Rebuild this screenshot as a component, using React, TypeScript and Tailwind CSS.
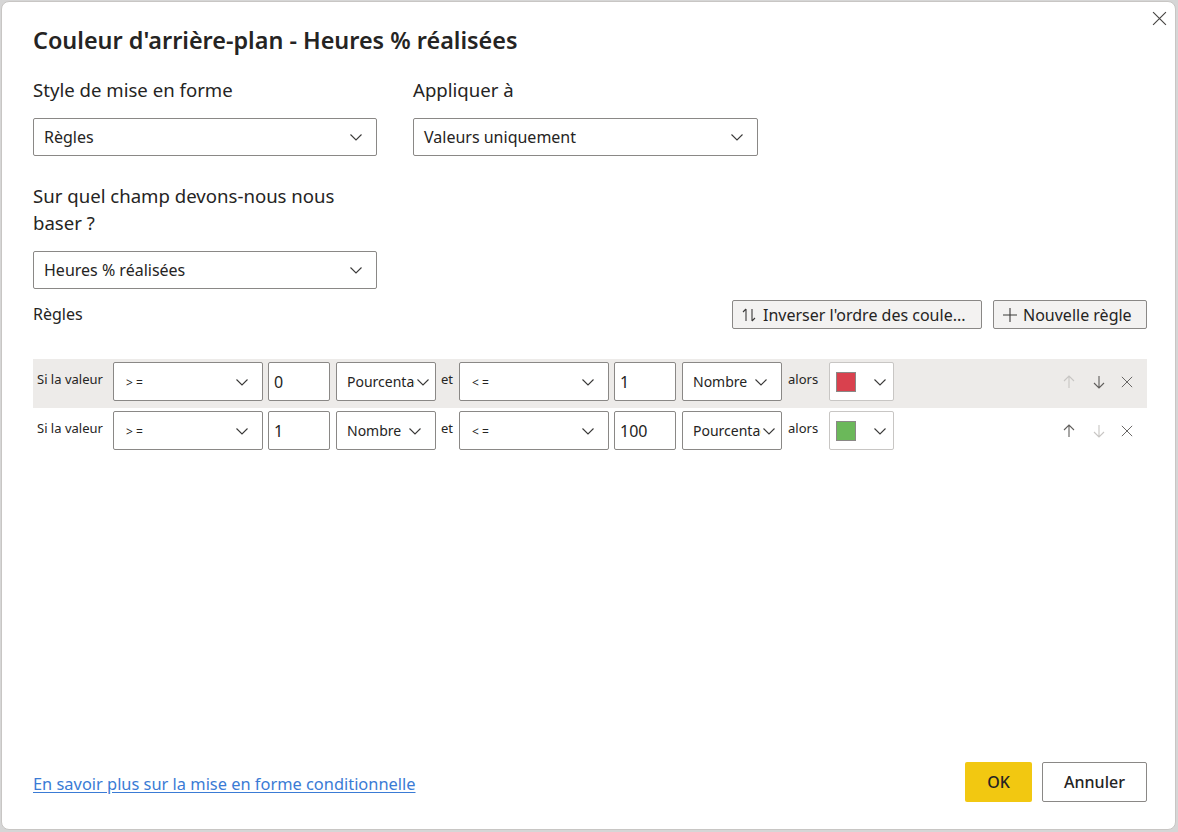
import React from "react";

const font = { fontFamily: '"Segoe UI", "Noto Sans", sans-serif' };

function Chevron({ className = "" }: { className?: string }) {
  return (
    <svg width="16" height="16" viewBox="0 0 16 16" className={className} fill="none">
      <path d="M2.5 5.5 8 11l5.5-5.5" stroke="#3b3a39" strokeWidth="1.1" />
    </svg>
  );
}

function Select({ value, w }: { value: string; w: string }) {
  return (
    <div
      className={`${w} h-[38px] border border-[#8a8886] rounded-[2px] bg-white flex items-center justify-between pl-[10px] pr-[12px] text-[16px] text-[#252423]`}
    >
      <span>{value}</span>
      <Chevron />
    </div>
  );
}

function RuleSelect({ value, w, small, tight }: { value: string; w: string; small?: boolean; tight?: boolean }) {
  return (
    <div
      className={`${w} h-[39px] border border-[#8a8886] rounded-[2px] bg-white flex items-center justify-between pl-[10px] ${tight ? "pr-[4px]" : "pr-[12px]"} text-[#252423] overflow-hidden`}
    >
      <span className={`${small ? "text-[12px] pl-[2px] pt-[3px]" : "text-[14px]"} whitespace-nowrap overflow-hidden`}>{value}</span>
      <Chevron className="shrink-0" />
    </div>
  );
}

function NumInput({ value }: { value: string }) {
  return (
    <div className="w-[62px] h-[39px] border border-[#8a8886] rounded-[2px] bg-white flex items-center pl-[5px] text-[16px] text-[#252423]">
      {value}
    </div>
  );
}

function Arrow({ up, faded }: { up?: boolean; faded?: boolean }) {
  return (
    <svg width="16" height="16" viewBox="0 0 16 16" fill="none" className={up ? "" : "rotate-180"}>
      <path d="M8 14V2M3 7l5-5 5 5" stroke={faded ? "#c8c6c4" : "#605e5c"} strokeWidth="1.1" />
    </svg>
  );
}

function Cross({ size = 14, color = "#605e5c" }: { size?: number; color?: string }) {
  return (
    <svg width={size} height={size} viewBox="0 0 14 14" fill="none">
      <path d="M1 1l12 12M13 1 1 13" stroke={color} strokeWidth="1.1" />
    </svg>
  );
}

function Rule({
  shaded,
  a,
  unitA,
  b,
  unitB,
  color,
  upFaded,
  downFaded,
}: {
  shaded?: boolean;
  a: string;
  unitA: string;
  b: string;
  unitB: string;
  color: string;
  upFaded?: boolean;
  downFaded?: boolean;
}) {
  return (
    <div className={`flex items-start h-[49px] pt-[3px] pl-[4px] pr-[14px] ${shaded ? "bg-[#edebe9]" : "bg-white"}`}>
      <span className="text-[13px] text-[#252423] w-[76px] pt-[8px] whitespace-nowrap">Si la valeur</span>
      <RuleSelect value="> =" w="w-[150px]" small />
      <div className="w-[5px]" />
      <NumInput value={a} />
      <div className="w-[6px]" />
      <RuleSelect value={unitA} w="w-[100px]" tight={unitA === "Pourcentage"} />
      <span className="text-[13px] text-[#252423] w-[23px] pl-[5px] pt-[8px]">et</span>
      <RuleSelect value="< =" w="w-[150px]" small />
      <div className="w-[5px]" />
      <NumInput value={b} />
      <div className="w-[6px]" />
      <RuleSelect value={unitB} w="w-[100px]" tight={unitB === "Pourcentage"} />
      <span className="text-[13px] text-[#252423] w-[47px] pl-[6px] pt-[8px]">alors</span>
      <div className="w-[65px] h-[39px] border border-[#c8c6c4] rounded-[2px] bg-white flex items-center pl-[6px] pr-[4px] gap-[16px]">
        <div className="w-[20px] h-[20px] border border-[#8a8886]" style={{ background: color }} />
        <Chevron />
      </div>
      <div className="flex-1" />
      <div className="flex items-center gap-[14px] h-[39px]">
        <Arrow up faded={upFaded} />
        <Arrow faded={downFaded} />
        <Cross size={12} />
      </div>
    </div>
  );
}

export default function App() {
  return (
    <div className="w-[1178px] h-[832px] bg-[#d6d6d6] overflow-hidden" style={font}>
      <div className="ml-[1px] mt-[1px] w-[1175px] h-[829px] bg-white border border-[#c8c6c4] rounded-[8px] flex flex-col relative pl-[31px] pr-[28px]">
        <button className="absolute right-[7px] top-[8px] p-[1px]">
          <Cross size={15} color="#484644" />
        </button>

        <h1 className="mt-[22px] text-[23.4px] font-semibold text-[#252423] leading-[32px]">
          Couleur d'arrière-plan - Heures % réalisées
        </h1>

        <div className="mt-[22px] flex gap-[36px]">
          <div className="w-[344px]">
            <div className="text-[18.6px] text-[#252423] leading-[24px]">Style de mise en forme</div>
            <div className="mt-[16px]">
              <Select value="Règles" w="w-[344px]" />
            </div>
          </div>
          <div className="w-[345px]">
            <div className="text-[18.6px] text-[#252423] leading-[24px]">Appliquer à</div>
            <div className="mt-[16px]">
              <Select value="Valeurs uniquement" w="w-[345px]" />
            </div>
          </div>
        </div>

        <div className="mt-[26px] w-[344px] text-[18.6px] text-[#252423] leading-[27px]">
          Sur quel champ devons-nous nous baser ?
        </div>
        <div className="mt-[15px]">
          <Select value="Heures % réalisées" w="w-[344px]" />
        </div>

        <div className="mt-[11px] flex items-start justify-between">
          <span className="text-[16px] text-[#252423] pt-[2px]">Règles</span>
          <div className="flex gap-[11px]">
            <button className="h-[29px] w-[250px] border border-[#8a8886] rounded-[2px] bg-[#f3f2f1] flex items-center gap-[6px] pl-[8px] text-[16px] text-[#252423]">
              <svg width="16" height="16" viewBox="0 0 16 16" fill="none">
                <path d="M5 14V2M2 5l3-3M11 2v12M14 11l-3 3" stroke="#3b3a39" strokeWidth="1.1" />
              </svg>
              <span className="whitespace-nowrap">Inverser l'ordre des coule...</span>
            </button>
            <button className="h-[29px] w-[154px] border border-[#8a8886] rounded-[2px] bg-[#f3f2f1] flex items-center gap-[5px] pl-[8px] text-[16px] text-[#252423]">
              <svg width="16" height="16" viewBox="0 0 16 16" fill="none">
                <path d="M8 1v14M1 8h14" stroke="#3b3a39" strokeWidth="1.1" />
              </svg>
              <span className="whitespace-nowrap">Nouvelle règle</span>
            </button>
          </div>
        </div>

        <div className="mt-[30px] flex flex-col">
          <Rule shaded a="0" unitA="Pourcentage" b="1" unitB="Nombre" color="#d9414e" upFaded />
          <Rule a="1" unitA="Nombre" b="100" unitB="Pourcentage" color="#6bb85a" downFaded />
        </div>

        <div className="flex-1" />

        <div className="mb-[27px] flex items-center justify-between">
          <a className="text-[16.4px] text-[#3a7bd5] underline underline-offset-[2px] pt-[4px]">
            En savoir plus sur la mise en forme conditionnelle
          </a>
          <div className="flex gap-[10px]">
            <button className="w-[67px] h-[40px] rounded-[2px] bg-[#f2c811] text-[16px] font-medium text-[#252423]">OK</button>
            <button className="w-[105px] h-[40px] rounded-[2px] border border-[#8a8886] bg-white text-[16px] font-medium text-[#252423]">
              Annuler
            </button>
          </div>
        </div>
      </div>
    </div>
  );
}
